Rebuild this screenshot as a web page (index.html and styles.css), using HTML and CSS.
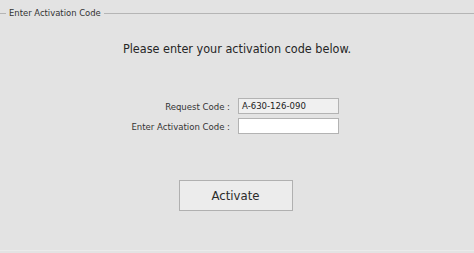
FILE: index.html
```html
<!DOCTYPE html>
<html>
<head>
<meta charset="utf-8">
<link rel="stylesheet" href="styles.css">
</head>
<body>
<fieldset class="group">
  <legend class="legend">Enter Activation Code</legend>
  <div class="content">
    <p class="heading">Please enter your activation code below.</p>
    <div class="form">
      <label class="label">Request Code :</label>
      <div class="field readonly">A-630-126-090</div>
      <label class="label">Enter Activation Code :</label>
      <div class="field"></div>
    </div>
    <button class="btn">Activate</button>
  </div>
</fieldset>
</body>
</html>
```
FILE: styles.css
```css
html, body {
  margin: 0;
  padding: 0;
  width: 474px;
  height: 253px;
  background: #e3e3e3;
  font-family: "DejaVu Sans Condensed", "DejaVu Sans", sans-serif;
  color: #2b2b2b;
  overflow: hidden;
}
.group {
  box-sizing: border-box;
  margin: 7px 0 0 0;
  padding: 0;
  width: 474px;
  height: 244px;
  border: none;
  border-top: 1px solid #b5b5b5;
  border-bottom: 1px solid #ebebeb;
}
.legend {
  padding: 0 3px;
  margin-left: 6px;
  font-size: 9.4px;
  color: #333;
  line-height: 12px;
}
.content {
  display: flex;
  flex-direction: column;
  align-items: center;
}
.heading {
  margin: 22px 0 0 0;
  font-size: 12.5px;
  line-height: 16px;
  color: #262626;
}
.form {
  margin-top: 41px;
  display: grid;
  grid-template-columns: 230px 101px;
  column-gap: 8px;
  row-gap: 4px;
  align-items: center;
  align-self: flex-start;
}
.label {
  text-align: right;
  font-size: 9.5px;
  color: #333;
}
.field {
  box-sizing: border-box;
  height: 16px;
  border: 1px solid #b3b3b3;
  background: #fff;
  font-size: 9.5px;
  line-height: 14px;
  padding-left: 3px;
  color: #222;
}
.field.readonly {
  background: #f0f0f0;
}
.btn {
  margin-top: 46px;
  margin-right: 3px;
  width: 114px;
  height: 31px;
  box-sizing: border-box;
  border: 1px solid #b0b0b0;
  background: #ececec;
  font-family: "DejaVu Sans Condensed", "DejaVu Sans", sans-serif;
  font-size: 13px;
  color: #2b2b2b;
  padding: 0;
}
```
